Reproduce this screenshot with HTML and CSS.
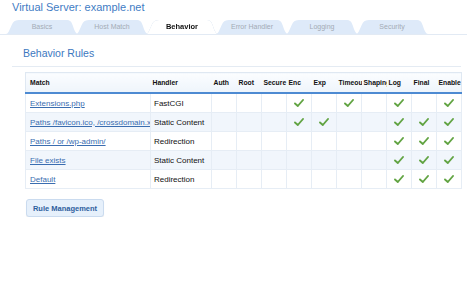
FILE: index.html
```html
<!DOCTYPE html>
<html lang="en">
<head>
    <meta charset="UTF-8">
    <meta name="viewport" content="width=device-width, initial-scale=1.0">
    <title>Virtual Server: example.net</title>
    <link rel="stylesheet" href="styles.css">
</head>
<body>
    <h1 class="title">Virtual Server: example.net</h1>

    <div class="tabs">
        <div class="tab">Basics</div>
        <div class="tab">Host Match</div>
        <div class="tab active">Behavior</div>
        <div class="tab">Error Handler</div>
        <div class="tab">Logging</div>
        <div class="tab">Security</div>
    </div>

    <div class="section">
        <h2>Behavior Rules</h2>

        <table class="rules">
            <colgroup>
                <col class="c-match"><col class="c-handler">
                <col><col><col><col><col><col><col><col><col><col>
            </colgroup>
            <thead>
                <tr>
                    <th>Match</th><th>Handler</th><th>Auth</th><th>Root</th><th>Secure</th>
                    <th>Enc</th><th>Exp</th><th>Timeout</th><th>Shaping</th><th>Log</th>
                    <th>Final</th><th>Enable</th>
                </tr>
            </thead>
            <tbody>
                <tr>
                    <td><a href="#">Extensions.php</a></td><td>FastCGI</td>
                    <td></td><td></td><td></td><td class="ok"></td><td></td><td class="ok"></td><td></td>
                    <td class="ok"></td><td></td><td class="ok"></td>
                </tr>
                <tr>
                    <td><a href="#">Paths /favicon.ico, /crossdomain.xml</a></td><td>Static Content</td>
                    <td></td><td></td><td></td><td class="ok"></td><td class="ok"></td><td></td><td></td>
                    <td class="ok"></td><td class="ok"></td><td class="ok"></td>
                </tr>
                <tr>
                    <td><a href="#">Paths / or /wp-admin/</a></td><td>Redirection</td>
                    <td></td><td></td><td></td><td></td><td></td><td></td><td></td>
                    <td class="ok"></td><td class="ok"></td><td class="ok"></td>
                </tr>
                <tr>
                    <td><a href="#">File exists</a></td><td>Static Content</td>
                    <td></td><td></td><td></td><td></td><td></td><td></td><td></td>
                    <td class="ok"></td><td class="ok"></td><td class="ok"></td>
                </tr>
                <tr>
                    <td><a href="#">Default</a></td><td>Redirection</td>
                    <td></td><td></td><td></td><td></td><td></td><td></td><td></td>
                    <td class="ok"></td><td class="ok"></td><td class="ok"></td>
                </tr>
            </tbody>
        </table>

        <button class="btn">Rule Management</button>
    </div>

    <script>
        // fill every "ok" cell with the green tick
        const tick = '<svg width="10" height="8" viewBox="0 0 10 8"><path d="M1 4.5 L3.8 7 L9 1" fill="none" stroke="#62a443" stroke-width="1.9" stroke-linecap="round" stroke-linejoin="round"/></svg>';
        document.querySelectorAll('td.ok').forEach(td => td.innerHTML = tick);
    </script>
</body>
</html>
```

FILE: styles.css
```css
body {
    margin: 0;
    font-family: "Liberation Sans", Arial, sans-serif;
    background-color: #ffffff;
    color: #222;
}
.title {
    margin: 0 0 0 12px;
    font-size: 11px;
    line-height: 14px;
    font-weight: normal;
    color: #3f7cc4;
}
.tabs {
    display: flex;
    margin-top: 6px;
    padding-left: 6px;
    width: 461px;
    border-bottom: 1px solid #e2eaf4;
}
.tab {
    position: relative;
    width: 72px;
    margin-right: -2px;
    height: 14px;
    line-height: 14px;
    font-size: 7px;
    text-align: center;
    color: #a3abb5;
}
.tab::before {
    content: '';
    position: absolute;
    inset: 0;
    z-index: -1;
    background-color: #deeaf9;
    clip-path: path('M0,14 C4,14 5,1 10,0.5 Q11,0 13,0 L61,0 Q63,0 64,1 C67,2 68,14 72,14 Z');
}
.tab.active {
    z-index: 1;
    color: #111;
    font-weight: bold;
    font-size: 7.5px;
    filter: drop-shadow(0 0 0.6px #b7cbe2);
}
.tab.active::before {
    background-color: #ffffff;
}
.section {
    margin-left: 12px;
    width: 449px;
}
.section h2 {
    margin: 11px 0 0;
    padding: 0 0 6px 11px;
    font-size: 10.5px;
    line-height: 14px;
    font-weight: normal;
    color: #3c78c0;
    border-bottom: 1px solid #e4ebf3;
}
.rules {
    margin: 5px 0 0 13px;
    width: 436px;
    table-layout: fixed;
    border-collapse: collapse;
    font-size: 8px;
    border: 1px solid #dfe8f2;
}
.rules col { width: 25px; }
.rules col.c-match { width: 125px; }
.rules col.c-handler { width: 61px; }
.rules th {
    height: 19px;
    padding: 0 0 0 2px;
    text-align: left;
    font-size: 6.8px;
    white-space: nowrap;
    overflow: hidden;
    color: #111;
    background: linear-gradient(#fbfdff, #eef4fb);
    border-bottom: 2px solid #4d8ad2;
}
.rules th:first-child { padding-left: 4px; }
.rules td {
    height: 18px;
    padding: 0 0 0 3px;
    white-space: nowrap;
    overflow: hidden;
    border: 1px solid #e6edf5;
    color: #111;
}
.rules td:first-child { padding-left: 4px; }
.rules tbody tr:nth-child(even) td { background-color: #f1f6fc; }
.rules td.ok {
    padding: 0;
    text-align: center;
    line-height: 0;
}
.rules a {
    color: #3a6db0;
}
.btn {
    margin: 10px 0 0 14px;
    width: 78px;
    height: 18px;
    padding: 0;
    font-family: inherit;
    font-size: 7.5px;
    font-weight: bold;
    color: #2e5f9e;
    background-color: #e6f0fb;
    border: 1px solid #cadbef;
    border-radius: 3px;
    box-shadow: 0 1px 1px rgba(0,0,0,0.06);
}
```
